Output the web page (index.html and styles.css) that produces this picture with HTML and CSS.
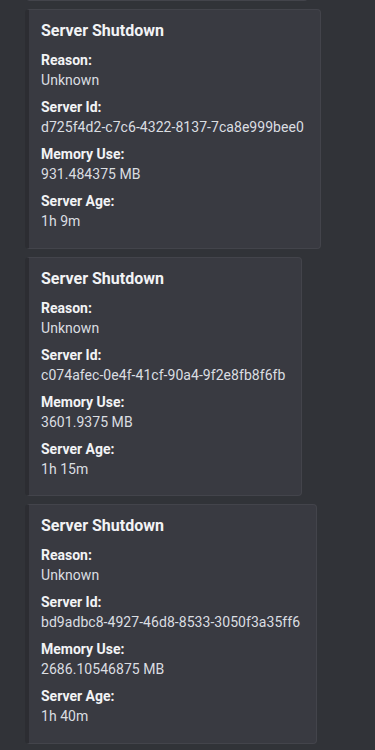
FILE: index.html
```html
<!DOCTYPE html>
<html lang="en">
<head>
<meta charset="utf-8">
<title>Server Shutdown</title>
<link rel="stylesheet" href="styles.css">
</head>
<body>
<div class="feed">
  <div class="embed-tail"></div>
  <div class="embed">
    <div class="embed-title">Server Shutdown</div>
    <div class="fields">
      <div class="field"><div class="field-name">Reason:</div><div class="field-value">Unknown</div></div>
      <div class="field"><div class="field-name">Server Id:</div><div class="field-value">d725f4d2-c7c6-4322-8137-7ca8e999bee0</div></div>
      <div class="field"><div class="field-name">Memory Use:</div><div class="field-value">931.484375 MB</div></div>
      <div class="field"><div class="field-name">Server Age:</div><div class="field-value">1h 9m</div></div>
    </div>
  </div>
  <div class="embed">
    <div class="embed-title">Server Shutdown</div>
    <div class="fields">
      <div class="field"><div class="field-name">Reason:</div><div class="field-value">Unknown</div></div>
      <div class="field"><div class="field-name">Server Id:</div><div class="field-value">c074afec-0e4f-41cf-90a4-9f2e8fb8f6fb</div></div>
      <div class="field"><div class="field-name">Memory Use:</div><div class="field-value">3601.9375 MB</div></div>
      <div class="field"><div class="field-name">Server Age:</div><div class="field-value">1h 15m</div></div>
    </div>
  </div>
  <div class="embed">
    <div class="embed-title">Server Shutdown</div>
    <div class="fields">
      <div class="field"><div class="field-name">Reason:</div><div class="field-value">Unknown</div></div>
      <div class="field"><div class="field-name">Server Id:</div><div class="field-value">bd9adbc8-4927-46d8-8533-3050f3a35ff6</div></div>
      <div class="field"><div class="field-name">Memory Use:</div><div class="field-value">2686.10546875 MB</div></div>
      <div class="field"><div class="field-name">Server Age:</div><div class="field-value">1h 40m</div></div>
    </div>
  </div>
</div>
</body>
</html>
```
FILE: styles.css
```css
html, body {
  margin: 0;
  padding: 0;
  background: #313338;
  height: 100%;
  overflow: hidden;
}
body {
  font-family: Roboto, "Noto Sans", sans-serif;
  color: #dbdee1;
}
.feed {
  display: flex;
  flex-direction: column;
  align-items: flex-start;
  gap: 8px;
  padding-left: 25px;
}
.embed-tail {
  width: 278px;
  height: 0;
  margin-top: -4px;
  padding-top: 4px;
  background: #393a41;
  border: 1px solid #43444b;
  border-top: none;
  border-left: 4px solid #2c2d32;
  border-radius: 0 0 4px 4px;
}
.embed {
  box-sizing: border-box;
  background: #393a41;
  border: 1px solid #43444b;
  border-left: 4px solid #2c2d32;
  border-radius: 4px;
  padding: 10px 16px 16.5px 12px;
  display: flex;
  flex-direction: column;
  gap: 8px;
}
.embed-title {
  font-size: 16px;
  font-weight: 700;
  line-height: 22px;
  color: #f2f3f5;
}
.fields {
  display: flex;
  flex-direction: column;
  gap: 7px;
}
.field-name {
  font-size: 14px;
  font-weight: 700;
  line-height: 20px;
  color: #f2f3f5;
}
.field-value {
  font-size: 14px;
  font-weight: 400;
  line-height: 20px;
  color: #dbdee1;
  white-space: nowrap;
  letter-spacing: 0.05px;
}
```
